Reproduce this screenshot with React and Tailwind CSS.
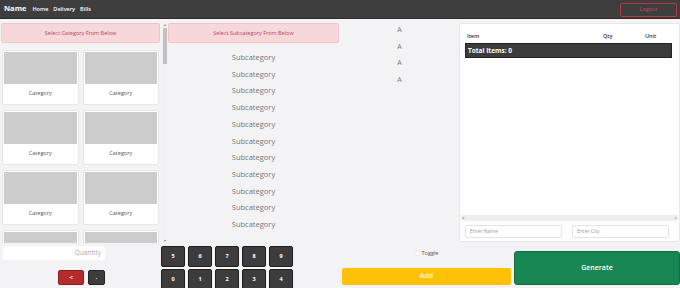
import React from 'react'

const subcategories = Array.from({ length: 11 }, () => 'Subcategory')
const letters = ['A', 'A', 'A', 'A']
const keys = ['5', '6', '7', '8', '9', '0', '1', '2', '3', '4']

function CategoryCard({ partial }) {
  return (
    <div className="h-[55px] bg-white rounded-[2px] border border-[#e6e6e6] p-[1px] flex flex-col">
      <div className="h-[32px] bg-[#cccccc]" />
      {!partial && (
        <div className="flex-1 flex items-center justify-center text-[5.5px] text-[#555]">Category</div>
      )}
    </div>
  )
}

export default function App() {
  return (
    <div className="w-[680px] h-[288px] overflow-hidden bg-[#f3f3f5] font-['Open_Sans',sans-serif]">
      {/* nav */}
      <nav className="h-[19px] bg-[#3e3e3e] border-b border-[#2b2b2b] flex items-center pl-[4px] pr-[3px]">
        <span className="text-[7.5px] font-bold text-white">Name</span>
        <div className="flex gap-[5px] ml-[6px] text-[5.5px] font-semibold text-white">
          <span>Home</span>
          <span>Delivery</span>
          <span>Bills</span>
        </div>
        <button className="ml-auto w-[57px] h-[14px] mt-[1px] rounded-[2px] border border-[#b5393c] text-[5.5px] text-[#d0454a]">
          Logout
        </button>
      </nav>

      {/* top row */}
      <div className="flex h-[224px]">
        {/* categories */}
        <div className="w-[162px] pt-[4px] pl-[1px] pr-[2px] overflow-hidden">
          <div className="h-[20px] rounded-[2px] bg-[#f8d7da] border border-[#f5c6cb] flex items-center justify-center text-[5.5px] text-[#b04a5a]">
            Select Category From Below
          </div>
          <div className="grid grid-cols-2 gap-x-[4px] gap-y-[5px] mt-[7px] px-[1px]">
            {Array.from({ length: 8 }).map((_, i) => (
              <CategoryCard key={i} partial={i >= 6} />
            ))}
          </div>
        </div>

        {/* scrollbar */}
        <div className="w-[5px] mt-[4px] flex flex-col items-center bg-[#f1f1f1]">
          <div className="text-[4px] leading-[4px] text-[#888]">▴</div>
          <div className="w-[4px] h-[36px] bg-[#c1c1c1] mt-[1px]" />
          <div className="flex-1" />
          <div className="text-[4px] leading-[4px] text-[#888]">▾</div>
        </div>

        {/* subcategories */}
        <div className="w-[173px] pt-[4px] px-[1px]">
          <div className="h-[20px] rounded-[2px] bg-[#f8d7da] border border-[#f5c6cb] flex items-center justify-center text-[5.5px] text-[#b04a5a]">
            Select Subcategory From Below
          </div>
          <div className="mt-[6px] flex flex-col items-center">
            {subcategories.map((s, i) => (
              <div key={i} className="leading-[16.7px] text-[7.5px] text-[#777]">
                {s}
              </div>
            ))}
          </div>
        </div>

        {/* letters */}
        <div className="w-[119px] pt-[3px] flex flex-col items-center">
          {letters.map((l, i) => (
            <div key={i} className="leading-[16.7px] text-[7px] text-[#777]">
              {l}
            </div>
          ))}
        </div>

        {/* order card */}
        <div className="flex-1 mt-[4px] mb-[1px] bg-white rounded-[3px] border border-[#e8e8e8] flex flex-col">
          <div className="flex-1 pt-[5px] pl-[5px] pr-[7px]">
            <div className="grid grid-cols-[136px_42px_1fr] h-[14px] items-center text-[5.5px] font-semibold text-[#333] pl-[2px]">
              <span>Item</span>
              <span>Qty</span>
              <span>Unit</span>
            </div>
            <div className="h-[15px] bg-[#3c3c3c] border border-[#222] flex items-center pl-[2px] text-[6.5px] font-bold text-white">
              Total Items: 0
            </div>
          </div>
          <div className="h-[6px] mx-[1px] bg-[#eeeeee] flex items-center justify-between px-[1px] text-[4px] leading-[4px] text-[#999]">
            <span>◂</span>
            <span>▸</span>
          </div>
          <div className="flex gap-[10px] pl-[5px] pt-[4px] pb-[3px]">
            <div className="w-[97px] h-[13px] rounded-[2px] bg-white border border-[#e3e3e3] flex items-center pl-[4px] text-[5px] text-[#999]">
              Enter Name
            </div>
            <div className="w-[97px] h-[13px] rounded-[2px] bg-white border border-[#e3e3e3] flex items-center pl-[4px] text-[5px] text-[#999]">
              Enter City
            </div>
          </div>
        </div>
      </div>

      {/* bottom row */}
      <div className="flex h-[45px]">
        <div className="w-[161px] pt-[3px]">
          <div className="ml-[3px] w-[102px] h-[14px] rounded-[2px] bg-white flex items-center justify-end pr-[4px] text-[6.5px] text-[#aaa]">
            Quantity
          </div>
          <div className="flex gap-[4px] mt-[10px] pl-[58px]">
            <button className="w-[26px] h-[15px] rounded-[2px] bg-[#b52c2c] border border-[#8a1e1e] text-[5px] font-bold text-white font-['DejaVu_Sans',sans-serif]">
              &lt;
            </button>
            <button className="w-[17px] h-[15px] rounded-[2px] bg-[#3c3c3c] border border-[#222] text-[5px] font-bold text-white">
              .
            </button>
          </div>
        </div>

        <div className="w-[132px] pt-[3px] grid grid-cols-5 gap-x-[3px] gap-y-[2px] content-start">
          {keys.map((k) => (
            <button
              key={k}
              className="h-[21px] rounded-[2px] bg-[#3c3c3c] border border-[#1e1e1e] text-[5.5px] font-bold text-white"
            >
              {k}
            </button>
          ))}
        </div>

        <div className="w-[169px] ml-[49px] flex flex-col items-center">
          <div className="mt-[5px] h-[10px] flex items-center gap-[2px] text-[5.5px] text-[#555]">
            <span className="w-[5px] h-[5px] bg-white border border-[#eee]" />
            <span>Toggle</span>
          </div>
          <button className="mt-[10px] w-full h-[17px] rounded-[2px] bg-[#ffc107] text-[7px] font-semibold text-white">
            Add
          </button>
        </div>

        <div className="flex-1 ml-[3px] mt-[8px] h-[34px]">
          <button className="w-full h-full rounded-[3px] bg-[#198754] border border-[#146c43] text-[7px] font-semibold text-white">
            Generate
          </button>
        </div>
      </div>
    </div>
  )
}
